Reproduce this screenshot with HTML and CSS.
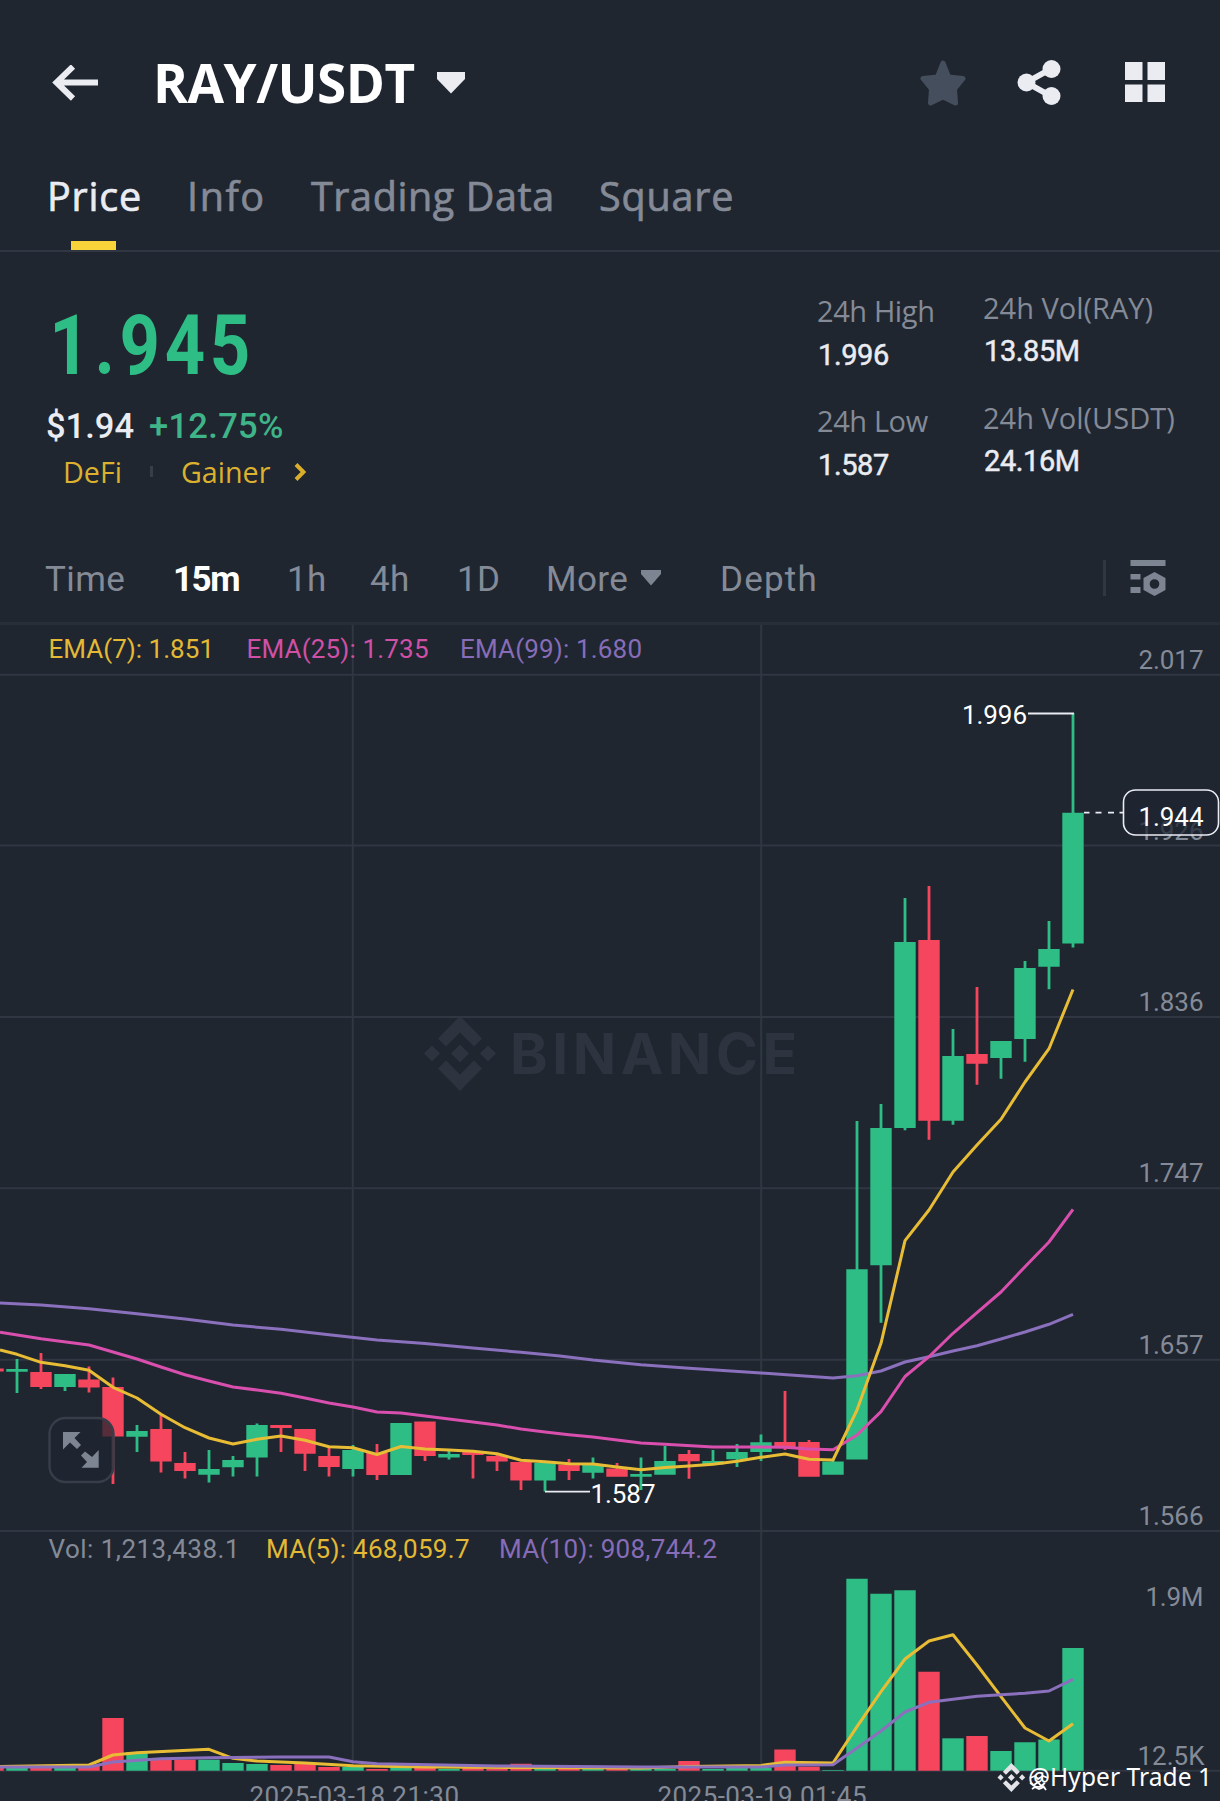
FILE: index.html
```html
<!DOCTYPE html>
<html lang="en">
<head>
<meta charset="utf-8">
<title>RAY/USDT</title>
<link rel="stylesheet" href="styles.css">
</head>
<body>
<header class="topbar">
  <svg class="back" viewBox="0 0 46 36" width="46" height="36"><path d="M46 17.500H6M21 1.500L4.500 17.500L21 33.500" fill="none" stroke="#eaecf2" stroke-width="6"/></svg>
  <h1 class="pair">RAY/USDT</h1>
  <svg class="caret" viewBox="0 0 28 22" width="28" height="22"><path d="M0 0H28V7L14 21.500L0 7Z" fill="#eaecf2"/></svg>
  <div class="actions">
    <svg viewBox="0 0 46 46" width="46" height="46"><path d="M23 3L28.500 17L43 18.500L34.500 29L35.500 43L23 37L10.500 43L11.500 29L3 18.500L17.500 17Z" fill="#454e5d" stroke="#454e5d" stroke-width="5" stroke-linejoin="round"/></svg>
    <svg viewBox="0 0 44 46" width="44" height="46"><path d="M34.500 8.500L9.500 22.500L34.500 36.500" fill="none" stroke="#eaecf2" stroke-width="6"/><circle cx="34.500" cy="9" r="9" fill="#eaecf2"/><circle cx="9.500" cy="22.500" r="9" fill="#eaecf2"/><circle cx="34.500" cy="36" r="9" fill="#eaecf2"/></svg>
    <svg class="apps" viewBox="0 0 40 40" width="40" height="40"><path d="M0 0H17.500V18H0ZM22.500 0H40V18H22.500ZM0 22.500H17.500V40H0ZM22.500 22.500H40V40H22.500Z" fill="#eaecf2"/></svg>
  </div>
</header>
<nav class="tabs">
  <div class="tab active"><span>Price</span><i class="marker"></i></div>
  <div class="tab"><span>Info</span></div>
  <div class="tab"><span>Trading Data</span></div>
  <div class="tab"><span>Square</span></div>
</nav>
<section class="quote">
  <div class="last">
    <div class="price">1.945</div>
    <div class="change"><span class="usd">$1.94</span><span class="pct">+12.75%</span></div>
    <div class="tags"><span>DeFi</span><i class="sep"></i><span>Gainer</span>
      <svg viewBox="0 0 12 18" width="12" height="18"><path d="M2 1.500L9.500 9L2 16.500" fill="none" stroke="#d9ae2b" stroke-width="4"/></svg></div>
  </div>
  <dl class="stats">
    <dt>24h High</dt><dd>1.996</dd>
    <dt>24h Low</dt><dd>1.587</dd>
  </dl>
  <dl class="stats vol">
    <dt>24h Vol(RAY)</dt><dd>13.85M</dd>
    <dt>24h Vol(USDT)</dt><dd>24.16M</dd>
  </dl>
</section>
<nav class="intervals">
  <span>Time</span><span class="on">15m</span><span>1h</span><span>4h</span><span>1D</span>
  <span class="more">More<svg viewBox="0 0 20 16" width="20" height="16"><path d="M0 0H20V4L10 15.500L0 4Z" fill="#7d8492"/></svg></span>
  <span class="depth">Depth</span>
  <i class="rule"></i>
  <svg class="settings" viewBox="0 0 36 36" width="36" height="36"><path fill-rule="evenodd" fill="#7d8492" d="M.500 0H35.500V6H.500ZM.500 14H10.500V19.500H.500ZM.500 27H10.500V33H.500ZM24.500 12L35.500 18V30L24.500 36L13.500 30V18ZM24.500 19.200A4.800 4.800 0 1 0 24.500 28.800A4.800 4.800 0 1 0 24.500 19.200Z"/></svg>
</nav>
<svg class="chart" viewBox="0 625 1220 1176" width="1220" height="1176"></svg>
<script src="chart.js"></script>
</body>
</html>
```
FILE: styles.css
```css
* { box-sizing: border-box; }
body { margin: 0; width: 1220px; height: 1801px; overflow: hidden; background: #1f2630; color: #eaecf2; font-family: "Open Sans", "Noto Sans", sans-serif; white-space: nowrap; }
i { font-style: normal; }
svg { display: block; flex: none; }

.topbar { display: flex; align-items: center; height: 165px; padding: 0 55px 0 52px; }
.pair { margin: 0 0 0 55px; width: 284px; font-size: 53px; font-weight: 700; line-height: 70px; letter-spacing: -0.500px; color: #fff; }
.actions { display: flex; align-items: center; margin-left: auto; }
.actions svg:nth-child(2) { margin: 0 64px 0 51px; }
.apps { margin-bottom: 1px; }

.tabs { display: grid; grid-template-columns: 140px 124px 288px 1fr; height: 87px; padding-left: 47px; border-bottom: 2px solid #303742; font-size: 39.500px; font-weight: 500; line-height: 63px; letter-spacing: 0.800px; color: #858a97; -webkit-text-stroke: 0.700px; }
.tab { display: flex; flex-direction: column; align-items: flex-start; }
.tab:nth-child(2) { letter-spacing: 1.600px; }
.tab:nth-child(3) { letter-spacing: 0.600px; }
.tab.active { color: #eaecf2; }
.marker { width: 45px; height: 9px; margin: 13px 0 0 24px; background: #f8d33a; }

.quote { display: flex; height: 285px; }
.last { width: 817px; padding: 51px 0 0 46px; }
.price { width: 240px; padding-left: 4px; font: 700 84px/86px Roboto, sans-serif; letter-spacing: 5.500px; color: #2ebd85; transform: scaleX(0.840); transform-origin: 0 50%; }
.change { display: flex; margin-top: 11px; font: 500 34.500px/52px Roboto, sans-serif; }
.usd { width: 103px; }
.pct { color: #3fb488; letter-spacing: 0.300px; }
.tags { display: flex; align-items: center; padding-left: 17px; font-size: 28.700px; line-height: 39px; color: #dcb12f; }
.sep { width: 3px; height: 11px; margin: 0 28px; background: #373e4a; }
.tags svg { margin-left: 24px; }
.stats { width: 166px; margin: 41px 0 0; }
.stats.vol { margin-top: 38px; }
dt { font-size: 29px; line-height: 36px; letter-spacing: -0.400px; color: #858a97; }
dd { margin: 8px 0 30px; padding-left: 1px; font: 400 29px/36px Roboto, sans-serif; letter-spacing: -0.400px; -webkit-text-stroke: 0.500px; }
.vol dt { letter-spacing: 0; }
.vol dd { margin: 7px 0 31px; }

.intervals { display: grid; grid-template-columns: 128px 114px 83px 87px 89px 174px 383px 27px 36px; align-items: center; height: 88px; padding-left: 45px; border-bottom: 3px solid #272e38; font: 400 35px/60px Roboto, sans-serif; letter-spacing: 0.400px; color: #858a97; }
.on { color: #fff; font-weight: 700; letter-spacing: -1.500px; }
.more { display: flex; align-items: center; gap: 13px; }
.more svg { margin-bottom: 4px; }
.depth { letter-spacing: 1.200px; }
.rule { width: 3px; height: 36px; margin-bottom: 4px; background: #303742; }
.settings { margin-bottom: 4px; }

.chart { font: 400 26px Roboto, sans-serif; }
.grid { stroke: #303742; stroke-width: 2; }
.up { fill: #2ebd85; }
.down { fill: #f6465d; }
.line { fill: none; stroke-width: 3; stroke-linejoin: round; }
.gold { stroke: #e8bd35; }
.pink { stroke: #d94fae; }
.violet { stroke: #8a70bd; }
.t-gold { fill: #e3b935; }
.t-pink { fill: #d050a6; }
.t-violet { fill: #876cb8; }
.t-gray { fill: #858a97; }
.t-white { fill: #fff; }
.brand { font: 700 57px Inter, sans-serif; fill: #2d343f; }
.credit { font: 400 24.500px "Noto Sans", sans-serif; fill: #fff; }
```
FILE: chart.js
```js
const chart = document.querySelector(".chart");
const out = [];
const STEP = 24, LAST = 1073, BODY = 21.4;

// wick top, body top, body bottom, wick bottom, direction
const candles = [
  [1368,1368.5,1371.5,1371,0],[1359,1369,1371.7,1393,1],[1353,1372,1387,1389,0],[1374,1374,1387,1391,1],
  [1366.5,1379.5,1387.5,1392.5,0],[1377.5,1387,1436.5,1484,0],[1425,1431,1436.7,1452,1],[1414,1429,1461.5,1472.5,0],
  [1452,1463,1471,1478.5,0],[1450,1469,1474.7,1482.5,1],[1456,1460,1467.3,1476.5,1],[1423.5,1425,1457.5,1476.5,1],
  [1425,1425,1428,1452,0],[1429,1429,1453.7,1471,0],[1448,1456,1467,1476.5,0],[1445,1450,1469,1476.5,1],
  [1444,1453,1475,1480,0],[1423,1423,1475,1475,1],[1421.5,1421.5,1456,1461,0],[1449,1454,1457.5,1459.5,1],
  [1452,1452,1455,1478.5,0],[1455,1456,1461.5,1471,0],[1462,1462,1480.5,1490,0],[1463,1463,1480.5,1491.5,1],
  [1459,1464.5,1471,1480,0],[1457.5,1464.5,1472.7,1478.5,1],[1463,1468.5,1476.7,1476.7,0],[1457.5,1474,1476.7,1490,1],
  [1446,1461,1474.7,1474.7,1],[1450,1454,1461.3,1478.7,0],[1450,1461,1464.5,1464.5,1],[1444,1452,1459.3,1467,1],
  [1434.5,1442.3,1452,1461,1],[1391,1442,1448,1450,0],[1440,1442,1476.7,1476.7,0],[1459,1461.5,1474.7,1474.7,1],
  [1121,1269.3,1459.5,1459.5,1],[1104,1128,1265.3,1322.7,1],[898,942,1128,1130.3,1],[886,940,1120.7,1139.7,0],
  [1029,1056,1120.7,1124.7,1],[987,1054,1063.7,1084.7,0],[1041,1041,1058,1078.7,1],[961,968,1039,1061.7,1],
  [921,949,966.7,989.3,1],[713,812.7,943.5,947.5,1]
];
const volumeTops = [1767,1767,1767,1766,1766,1718,1752,1759,1759.7,1759.7,1763,1764,1765,1764,1767,1767,1769,1767,1766,1769,1766,1769,1763.7,1769,1766.7,1769,1769,1768,1769,1761,1769,1768,1767.7,1749.5,1766.7,1770,1578.7,1593.7,1590.3,1671.7,1738.3,1736,1751,1742.3,1739.5,1648];
const BASE = 1770.7;

const text = (s, x, y, w, cls) => out.push(`<text class="${cls}" x="${x}" y="${y}" textLength="${w}">${s}</text>`);
const hline = y => out.push(`<path class="grid" d="M0 ${y}H1220"/>`);
const poly = (cls, pts) => out.push(`<polyline class="line ${cls}" points="${pts}"/>`);

// brand mark, drawn in a 72 x 75 box
const mark = (x, y, s, fill) => out.push(`<path transform="translate(${x} ${y}) scale(${s})" fill="${fill}" d="M36 0L58 22.500L50 30.500L36 16.500L22 30.500L14 22.500ZM8 29.500L16 37.500L8 45.500L0 37.500ZM36 28.500L45 37.500L36 46.500L27 37.500ZM64 29.500L72 37.500L64 45.500L56 37.500ZM22 44.500L36 58.500L50 44.500L58 52.500L36 75L14 52.500Z"/>`);

mark(424, 1016, 1, "#2d343f");
text("BINANCE", 510, 1073.5, 287, "brand");
[674.7, 845.6, 1017, 1188.3, 1359.7, 1531, 1770.7].forEach(hline);
[352.8, 761.2].forEach(x => out.push(`<path class="grid" d="M${x} 625V1771"/>`));

candles.forEach(([wt, bt, bb, wb, up], i) => {
  const x = LAST - STEP * (candles.length - 1 - i), c = up ? "up" : "down";
  out.push(`<path class="${c}" d="M${x - 1.4} ${wt}h2.800V${wb}h-2.800ZM${x - BODY / 2} ${bt}h${BODY}V${bb}h-${BODY}Z"/>`);
  out.push(`<path class="${c}" d="M${x - BODY / 2} ${volumeTops[i]}h${BODY}V${BASE}h-${BODY}Z"/>`);
});

poly("violet", "0,1303 41,1305 89,1308.7 137,1313.7 185,1319 233,1325 281,1329.3 329,1334.7 377,1340 425,1343.5 473,1348 521,1352.300 560,1356 593,1360 641,1364.7 689,1368.300 761,1373 833,1378 857,1375.7 881,1371 905,1362 929,1356.7 953,1351 977,1345.7 1001,1339 1025,1332 1049,1324.300 1073,1314.300");
poly("pink", "0,1332.300 41,1338.7 89,1345 113,1352 137,1359 161,1367 185,1374.7 209,1381 233,1387 257,1390 281,1393.300 305,1398 329,1403 353,1407 377,1412 401,1413 425,1416 449,1419 473,1422 497,1425 521,1429 545,1432 569,1434.7 593,1437 617,1440 641,1443 665,1444.300 713,1447 761,1447 785,1447.300 809,1449 833,1449.7 857,1435 881,1411.7 905,1376.500 929,1356.7 953,1333.300 977,1312.7 1001,1292 1025,1266.7 1049,1242 1073,1209.300");
poly("gold", "0,1350 17,1354.300 41,1362.300 65,1365.7 89,1370.300 113,1387.300 137,1398 161,1414.300 185,1427.7 209,1438 233,1444 257,1439.300 281,1436 305,1440.300 329,1446.7 353,1447.7 377,1454.500 401,1446.500 425,1449 449,1450 473,1451.300 497,1453.7 521,1460.300 545,1461.7 569,1463.7 593,1464 617,1467 641,1469.7 665,1467.500 689,1466 713,1464.300 737,1461.300 761,1457.300 785,1454 809,1459.300 833,1460 857,1410 881,1343.300 905,1240.7 929,1210 953,1172 977,1145 1001,1119.300 1025,1082 1049,1048.7 1073,989.500");
poly("gold", "0,1766.500 89,1765 113,1755 137,1752.7 209,1749.300 233,1758.300 257,1761 305,1763 353,1765.7 425,1767 641,1768 689,1766.500 761,1765.500 785,1762.300 833,1763 857,1726.7 881,1691.7 905,1659 929,1641 953,1634.7 977,1665 1001,1696.7 1025,1728 1049,1741 1073,1723.7");
poly("violet", "0,1767 89,1767 113,1762 161,1758.7 209,1757.7 281,1757 329,1757 353,1761.7 377,1763.7 497,1766 641,1767 761,1767 785,1765 833,1764.7 857,1748 881,1731 905,1712 929,1702.300 953,1699.300 977,1696.300 1001,1694.7 1025,1693.300 1049,1691 1073,1679.300");

text("EMA(7): 1.851", 48.5, 657.5, 165.5, "t-gold");
text("EMA(25): 1.735", 246.5, 657.5, 182, "t-pink");
text("EMA(99): 1.680", 460, 657.5, 182, "t-violet");
text("Vol: 1,213,438.1", 48.5, 1557.5, 191, "t-gray");
text("MA(5): 468,059.7", 266, 1557.5, 203.5, "t-gold");
text("MA(10): 908,744.2", 499, 1557.5, 218, "t-violet");
text("2025-03-18 21:30", 249.5, 1805, 209.5, "t-gray");
text("2025-03-19 01:45", 657.5, 1805, 209, "t-gray");

[["2.017", 668.7], ["1.926", 840], ["1.836", 1011], ["1.747", 1182], ["1.657", 1353.5], ["1.566", 1525]].forEach(([s, y]) => text(s, 1138.5, y, 65, "t-gray"));
text("1.9M", 1145.5, 1606, 58, "t-gray");
text("12.5K", 1137.5, 1765, 67, "t-gray");

// high and low callouts
out.push('<path d="M1028 713.500H1074M545 1491.700H590" stroke="#eaecf2" stroke-width="1.800"/>');
text("1.996", 962, 723.5, 65, "t-white");
text("1.587", 590.5, 1502.7, 65, "t-white");

// current price
out.push('<path d="M1084 812.600H1089.500M1095.500 812.600H1101.500M1108 812.600H1114M1119.500 812.600H1123" stroke="#eaecf2" stroke-width="1.600"/>');
out.push('<rect x="1123.500" y="790" width="95" height="45" rx="12" fill="#1f2630" fill-opacity=".75" stroke="#eaecf2" stroke-width="1.600"/>');
text("1.944", 1138.5, 826, 65, "t-white");

// expand button
out.push('<rect x="49.500" y="1418" width="64" height="64" rx="16" fill="#1f2630" fill-opacity=".75" stroke="#373e4a" stroke-width="2.400"/>');
out.push('<path fill="#7d8492" d="M63 1432H80.500L74.500 1438L81 1445L77 1449L70 1442.500L63 1449.500ZM98.700 1450V1467.700H81.500L87 1462L81 1455.500L85 1451.500L92 1457Z"/>');

mark(997.5, 1763, 0.385, "#e4e4e8");
text("@Hyper Trade 1", 1028, 1786, 184, "credit");
out.push('<path d="M1030 1778l5 -2l3 3l5 -3l5 2M1030 1783l4 2l4 -3l3 4l4 -3M1032 1789l3 -2l4 2l5 -2l2 3" fill="none" stroke="#fff" stroke-width="1.800"/>');
chart.innerHTML = out.join("");
```
